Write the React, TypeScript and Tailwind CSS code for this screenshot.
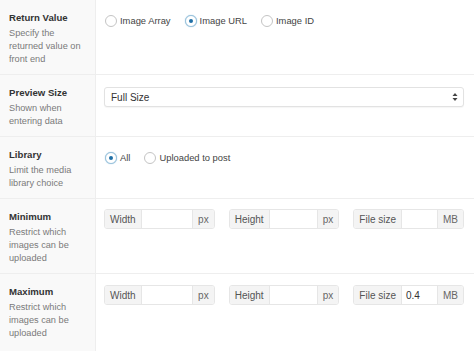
import React from "react";

const font = { fontFamily: '"Liberation Sans", Arial, sans-serif' };

function Label({ title, desc }: { title: string; desc: string[] }) {
  return (
    <div className="w-[96px] shrink-0 bg-[#f9f9f9] border-r border-[#eeeeee] pl-[9px] pr-[4px] pt-[11px] pb-[8px]">
      <div className="text-[9.6px] leading-[13px] font-bold text-[#333333]">{title}</div>
      <div className="mt-[3px] text-[9.2px] leading-[13px] text-[#7a7a7a]">
        {desc.map((d, i) => (
          <div key={i}>{d}</div>
        ))}
      </div>
    </div>
  );
}

function Radio({ label, checked }: { label: string; checked?: boolean }) {
  return (
    <div className="flex items-center gap-[3px]">
      <span
        className={
          "w-[12px] h-[12px] rounded-full bg-white flex items-center justify-center border " +
          (checked ? "border-[#9ac3dc] shadow-[0_0_1px_#7fb4d6]" : "border-[#c4c4c4]")
        }
      >
        {checked && <span className="w-[4px] h-[4px] rounded-full bg-[#1f6fa6]" />}
      </span>
      <span className="text-[9.4px] text-[#444444]">{label}</span>
    </div>
  );
}

function Group({ pre, post, value }: { pre: string; post: string; value?: string }) {
  return (
    <div className="flex h-[20px] rounded-[3px] border border-[#e6e6e6] overflow-hidden text-[10px] text-[#555555]">
      <div className="bg-[#f4f4f4] px-[5px] flex items-center border-r border-[#e6e6e6]">{pre}</div>
      <div className="flex-1 bg-white flex items-center pl-[4px] text-[#333333]">{value}</div>
      <div className="bg-[#f4f4f4] px-[5px] flex items-center border-l border-[#e6e6e6] text-[#666666]">{post}</div>
    </div>
  );
}

function Row({ children, last }: { children: React.ReactNode; last?: boolean }) {
  return <div className={"flex " + (last ? "flex-1" : "border-b border-[#eeeeee]")}>{children}</div>;
}

export default function App() {
  return (
    <div style={font} className="w-[474px] h-[351px] bg-white flex flex-col overflow-hidden">
      <Row>
        <Label title="Return Value" desc={["Specify the", "returned value on", "front end"]} />
        <div className="flex-1 pl-[9px] pr-[10px] pt-[11px]">
          <div className="flex items-center gap-[14px] h-[21px]">
            <Radio label="Image Array" />
            <Radio label="Image URL" checked />
            <Radio label="Image ID" />
          </div>
        </div>
      </Row>
      <Row>
        <Label title="Preview Size" desc={["Shown when", "entering data"]} />
        <div className="flex-1 pl-[8px] pr-[10px] pt-[12px]">
          <div className="h-[20px] rounded-[3px] border border-[#e2e2e2] bg-white flex items-center justify-between pl-[6px] pr-[5px] text-[10px] text-[#333333] shadow-[0_1px_1px_rgba(0,0,0,0.04)]">
            <span>Full Size</span>
            <svg width="6" height="10" viewBox="0 0 6 10">
              <path d="M3 1 L5.5 4 L0.5 4 Z" fill="#444" />
              <path d="M3 9 L5.5 6 L0.5 6 Z" fill="#444" />
            </svg>
          </div>
        </div>
      </Row>
      <Row>
        <Label title="Library" desc={["Limit the media", "library choice"]} />
        <div className="flex-1 pl-[9px] pr-[10px] pt-[11px]">
          <div className="flex items-center gap-[14px] h-[21px]">
            <Radio label="All" checked />
            <Radio label="Uploaded to post" />
          </div>
        </div>
      </Row>
      <Row>
        <Label title="Minimum" desc={["Restrict which", "images can be", "uploaded"]} />
        <div className="flex-1 pl-[8px] pr-[10px] pt-[10px]">
          <div className="grid grid-cols-3 gap-[14px]">
            <Group pre="Width" post="px" />
            <Group pre="Height" post="px" />
            <Group pre="File size" post="MB" />
          </div>
        </div>
      </Row>
      <Row last>
        <Label title="Maximum" desc={["Restrict which", "images can be", "uploaded"]} />
        <div className="flex-1 pl-[8px] pr-[10px] pt-[11px]">
          <div className="grid grid-cols-3 gap-[14px]">
            <Group pre="Width" post="px" />
            <Group pre="Height" post="px" />
            <Group pre="File size" post="MB" value="0.4" />
          </div>
        </div>
      </Row>
    </div>
  );
}
